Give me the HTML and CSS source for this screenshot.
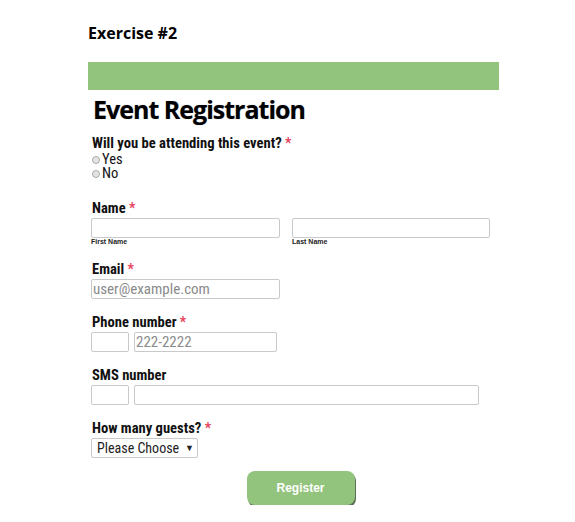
FILE: index.html
```html
<!DOCTYPE html>
<html>
<head>
<meta charset="utf-8">
<link rel="stylesheet" href="styles.css">
</head>
<body>
<div class="page">
  <h2 class="exercise">Exercise #2</h2>
  <div class="bar"></div>
  <form class="form">
    <h1 class="title">Event Registration</h1>
    <div class="group first-group">
      <div class="label">Will you be attending this event? <span class="req">*</span></div>
      <label class="radio"><span class="dot"></span>Yes</label>
      <label class="radio"><span class="dot"></span>No</label>
    </div>
    <div class="group name-group">
      <div class="label">Name <span class="req">*</span></div>
      <div class="row">
        <div class="col"><input class="input w-first" type="text"><div class="sub">First Name</div></div>
        <div class="col"><input class="input w-last" type="text"><div class="sub">Last Name</div></div>
      </div>
    </div>
    <div class="group">
      <div class="label">Email <span class="req">*</span></div>
      <input class="input w-first" type="text" placeholder="user@example.com">
    </div>
    <div class="group">
      <div class="label">Phone number <span class="req">*</span></div>
      <div class="row tight">
        <input class="input w-area" type="text">
        <input class="input w-phone" type="text" placeholder="222-2222">
      </div>
    </div>
    <div class="group">
      <div class="label">SMS number</div>
      <div class="row tight">
        <input class="input w-area" type="text">
        <input class="input w-sms" type="text">
      </div>
    </div>
    <div class="group">
      <div class="label">How many guests? <span class="req">*</span></div>
      <div class="select">Please Choose <span class="caret">&#9660;</span></div>
    </div>
    <div class="actions">
      <button type="button" class="btn">Register</button>
    </div>
  </form>
</div>
</body>
</html>
```
FILE: styles.css
```css
html, body { margin: 0; padding: 0; background: #fff; }
.page { padding: 0 0 0 88px; width: 411px; }
.exercise {
  font-family: "Open Sans", "Liberation Sans", sans-serif;
  font-weight: 700; font-size: 16px; color: #000;
  margin: 0; padding-top: 21px; height: 41px; line-height: 24px;
}
.bar { height: 28px; background: #93c47d; }
.form { padding-left: 3px; font-family: "Liberation Sans Narrow", "Roboto Condensed", "Liberation Sans", Arial, sans-serif; }
.title {
  font-family: "Open Sans", "Liberation Sans", sans-serif;
  font-weight: 700; font-size: 25px; line-height: 34px; letter-spacing: -1px;
  margin: 2px 0 0 2px; color: #000;
  text-shadow: 0 0 1px rgba(0,0,80,0.4);
}
.group { margin-top: 15px; }
.first-group { margin-top: 9px; }
.label { font-weight: 700; font-size: 14.6px; color: #111; line-height: 16px; padding-left: 1px; margin-bottom: 2px; }
.req { color: #e8405a; font-size: 14px; }
.radio { display: flex; align-items: center; font-size: 14.5px; line-height: 14px; height: 14px; color: #111; padding-left: 1px; }
.dot { width: 6px; height: 6px; border: 1px solid #aaa; border-radius: 50%; background: #e4e4e4; margin-right: 2px; }
.row { display: flex; gap: 12px; }
.row.tight { gap: 5px; }
.input {
  display: block; box-sizing: border-box; height: 20px; margin: 0;
  border: 1px solid #c9c9c9; border-radius: 2px; padding: 0 1px;
  font-family: "Liberation Sans Narrow", "Roboto Condensed", "Liberation Sans", Arial, sans-serif; font-size: 15px; color: #333;
  background: #fff;
}
.input::placeholder { color: #8a8a8a; }
.w-first { width: 189px; }
.w-last { width: 198px; }
.w-area { width: 38px; }
.w-phone { width: 143px; }
.w-sms { width: 345px; }
.sub { font-family: "Liberation Sans", Arial, sans-serif; font-size: 7px; font-weight: 700; color: #222; margin-top: 0; line-height: 8px; }
.name-group { margin-top: 19px; }
.phone-fix { margin-top: 16px; }
.select {
  display: inline-flex; align-items: center; box-sizing: border-box; white-space: nowrap;
  width: 107px; height: 20px; border: 1px solid #c9c9c9; border-radius: 2px;
  font-size: 14px; color: #222; padding-left: 5px;
}
.caret { font-size: 9px; margin-left: 6px; }
.actions { display: flex; justify-content: center; width: 419px; margin-top: 13px; }
.btn {
  width: 108px; height: 34px; border: none; border-radius: 8px;
  background: #93c47d; color: #fff; font-weight: 700; font-size: 12px;
  font-family: "Liberation Sans", Arial, sans-serif;
  box-shadow: 1px 2px 0 #5a6e50;
}
```
